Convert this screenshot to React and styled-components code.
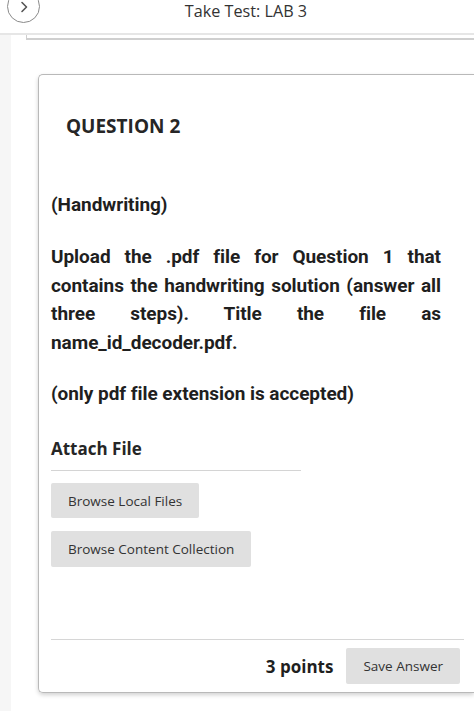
import styled, { createGlobalStyle } from "styled-components";

const GlobalStyle = createGlobalStyle`
  html, body {
    margin: 0;
    padding: 0;
    background: #ffffff;
  }
  body {
    font-family: "Open Sans", "Noto Sans", sans-serif;
    color: #262626;
    overflow: hidden;
  }
`;

const Header = styled.header`
  height: 33px;
  border-bottom: 2px solid #e6e6e6;
  display: flex;
  align-items: flex-start;
`;

const BackButton = styled.button`
  box-sizing: border-box;
  width: 33px;
  height: 33px;
  margin: -10px 0 0 7px;
  border-radius: 50%;
  border: 1px solid #8a8a8a;
  background: #fff;
  padding: 0;
  display: flex;
  align-items: center;
  justify-content: center;
  flex-shrink: 0;
`;

const Title = styled.h1`
  flex: 1;
  margin: 0;
  padding-right: 22px;
  text-align: center;
  font-family: "Open Sans", sans-serif;
  font-weight: 400;
  font-size: 16.2px;
  line-height: 22px;
  color: #333;
`;

const Body = styled.div`
  display: flex;
  min-height: 676px;
`;

const Rail = styled.div`
  width: 11px;
  background: #f6f6f6;
  flex-shrink: 0;
`;

const Main = styled.main`
  flex: 1;
  display: flex;
  flex-direction: column;
`;

const PrevBox = styled.div`
  margin-left: 15px;
  height: 3px;
  border-left: 1px solid #cfcfcf;
  border-bottom: 2px solid #cfcfcf;
`;

const Card = styled.section`
  margin: 34px 0 0 27px;
  border: 1px solid #b9b9b9;
  border-right: none;
  border-radius: 5px 0 0 5px;
  box-shadow: 0 2px 4px rgba(0, 0, 0, 0.18);
  padding: 0 10px 8px 12px;
  height: 609px;
  display: flex;
  flex-direction: column;
`;

const QuestionTitle = styled.h2`
  margin: 38px 0 0 15px;
  font-family: "Open Sans", sans-serif;
  font-weight: 700;
  font-size: 19px;
  line-height: 26px;
  color: #262626;
`;

const Prompt = styled.p`
  margin: ${(p) => p.$top}px 0 0;
  width: 390px;
  font-family: Roboto, "Noto Sans", sans-serif;
  font-weight: 700;
  font-size: 19px;
  line-height: 28.4px;
  letter-spacing: -0.05px;
  text-align: justify;
  color: #1f1f1f;
`;

const SectionLabel = styled.h3`
  margin: 29px 0 0;
  width: 250px;
  padding-bottom: 9px;
  border-bottom: 1px solid #d4d4d4;
  font-family: "Open Sans", sans-serif;
  font-weight: 700;
  font-size: 17px;
  line-height: 24px;
  color: #262626;
`;

const ButtonStack = styled.div`
  margin-top: 12px;
  display: flex;
  flex-direction: column;
  align-items: flex-start;
  gap: 13px;
`;

const GrayButton = styled.button`
  height: ${(p) => p.$h || 35}px;
  padding: 0 17px;
  border: none;
  border-radius: 2px;
  background: #e0e0e0;
  font-family: "Open Sans", sans-serif;
  font-size: 13.5px;
  color: #333;
`;

const Footer = styled.div`
  margin-top: auto;
  border-top: 1px solid #d6d6d6;
  padding: 8px 4px 0 0;
  display: flex;
  justify-content: flex-end;
  align-items: center;
  gap: 13px;
`;

const Points = styled.span`
  font-family: "Open Sans", sans-serif;
  font-weight: 700;
  font-size: 17px;
  color: #1f1f1f;
`;

export default function App() {
  return (
    <>
      <GlobalStyle />
      <Header>
        <BackButton aria-label="Back">
          <svg width="14" height="14" viewBox="0 0 14 14" fill="none">
            <path d="M5 2.5 L9.5 7 L5 11.5" stroke="#555" strokeWidth="1.6" strokeLinecap="round" strokeLinejoin="round" />
          </svg>
        </BackButton>
        <Title>Take Test: LAB 3</Title>
      </Header>
      <Body>
        <Rail />
        <Main>
          <PrevBox />
          <Card>
            <QuestionTitle>QUESTION 2</QuestionTitle>
            <Prompt $top={52}>(Handwriting)</Prompt>
            <Prompt $top={24}>
              Upload the .pdf file for Question 1 that contains the handwriting
              solution (answer all three steps). Title the file as
              name_id_decoder.pdf.
            </Prompt>
            <Prompt $top={23}>(only pdf file extension is accepted)</Prompt>
            <SectionLabel>Attach File</SectionLabel>
            <ButtonStack>
              <GrayButton>Browse Local Files</GrayButton>
              <GrayButton $h={36}>Browse Content Collection</GrayButton>
            </ButtonStack>
            <Footer>
              <Points>3 points</Points>
              <GrayButton $h={36}>Save Answer</GrayButton>
            </Footer>
          </Card>
        </Main>
      </Body>
    </>
  );
}
